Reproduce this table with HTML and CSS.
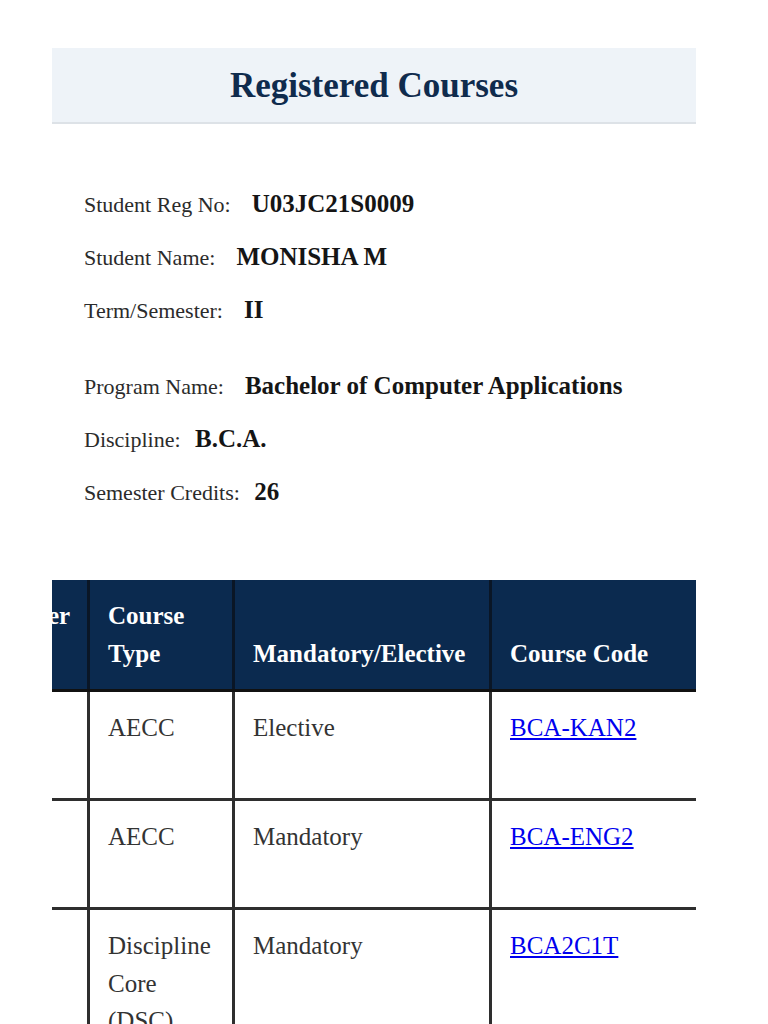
FILE: index.html
```html
<!DOCTYPE html>
<html lang="en">
<head>
<meta charset="utf-8">
<title>Registered Courses</title>
<link rel="stylesheet" href="styles.css">
</head>
<body>
<div class="page">
  <div class="title-box">
    <h1 class="title">Registered Courses</h1>
  </div>

  <div class="info">
    <div class="info-group">
      <div class="info-row"><span class="label">Student Reg No:</span><span class="value">U03JC21S0009</span></div>
      <div class="info-row"><span class="label">Student Name:</span><span class="value">MONISHA M</span></div>
      <div class="info-row"><span class="label">Term/Semester:</span><span class="value">II</span></div>
    </div>
    <div class="info-group">
      <div class="info-row"><span class="label">Program Name:</span><span class="value">Bachelor of Computer Applications</span></div>
      <div class="info-row info-row--tight"><span class="label">Discipline:</span><span class="value">B.C.A.</span></div>
      <div class="info-row info-row--tight"><span class="label">Semester Credits:</span><span class="value">26</span></div>
    </div>
  </div>

  <div class="table-scroll">
    <table class="courses">
      <thead>
        <tr>
          <th class="col-sl">Sl.<br>No</th>
          <th class="col-sem">Semester<br>No</th>
          <th class="col-type">Course Type</th>
          <th class="col-me">Mandatory/Elective</th>
          <th class="col-code">Course Code</th>
          <th class="col-name">Course Name</th>
          <th class="col-cr">Credits</th>
        </tr>
      </thead>
      <tbody>
        <tr class="row">
          <td>1</td>
          <td>II</td>
          <td>AECC</td>
          <td>Elective</td>
          <td><a href="#">BCA-KAN2</a></td>
          <td>Kannada</td>
          <td>3</td>
        </tr>
        <tr class="row">
          <td>2</td>
          <td>II</td>
          <td>AECC</td>
          <td>Mandatory</td>
          <td><a href="#">BCA-ENG2</a></td>
          <td>English</td>
          <td>3</td>
        </tr>
        <tr class="row">
          <td>3</td>
          <td>II</td>
          <td>Discipline Core (DSC)</td>
          <td>Mandatory</td>
          <td><a href="#">BCA2C1T</a></td>
          <td>Data Structures</td>
          <td>3</td>
        </tr>
      </tbody>
    </table>
  </div>
</div>
<script src="script.js"></script>
</body>
</html>
```

FILE: styles.css
```css
html, body {
  margin: 0;
  padding: 0;
  background: #ffffff;
}

body {
  font-family: "Liberation Serif", "Times New Roman", serif;
  color: #333333;
}

.page {
  width: 644px;
  padding: 48px 72px 0 52px;
}

.title-box {
  height: 74px;
  display: flex;
  align-items: center;
  justify-content: center;
  background: #eef3f8;
  border-bottom: 2px solid #dde2e7;
}

.title {
  margin: 0;
  font-size: 35px;
  font-weight: bold;
  color: #0f2b4d;
  padding-top: 2px;
}

.info {
  padding: 54px 0 0 32px;
  display: flex;
  flex-direction: column;
  gap: 23px;
}

.info-row {
  display: flex;
  align-items: baseline;
  gap: 21px;
  line-height: 52px;
}

.info-row--tight {
  gap: 14.5px;
}

.label {
  font-size: 22px;
  color: #2b2b2b;
}

.value {
  font-size: 25px;
  font-weight: bold;
  color: #151515;
}

.table-scroll {
  margin-top: 61px;
  overflow: hidden;
}

.courses {
  border-collapse: collapse;
  table-layout: fixed;
  width: 1267px;
  font-size: 25px;
  line-height: 37.5px;
}

.col-sl { width: 41px; }
.col-sem { width: 96px; }
.col-type { width: 106px; }
.col-me { width: 218px; }
.col-code { width: 181px; }
.col-name { width: 281px; }
.col-cr { width: 71px; }

.courses th {
  background: #0b2a4f;
  color: #ffffff;
  font-weight: bold;
  text-align: left;
  vertical-align: bottom;
  padding: 17px 18px 17px 18px;
  border-left: 3px solid #0a1626;
  border-right: 3px solid #0a1626;
  border-bottom: 3px solid #111111;
}

.courses td {
  color: #333333;
  text-align: left;
  vertical-align: top;
  padding: 17px 18px 13px 18px;
  border: 3px solid #2e2e2e;
}

.row {
  height: 109px;
}

.courses a {
  color: #0000ee;
  text-decoration: underline;
}
```

FILE: script.js
```js
document.querySelector('.table-scroll').scrollLeft = 180;
```
